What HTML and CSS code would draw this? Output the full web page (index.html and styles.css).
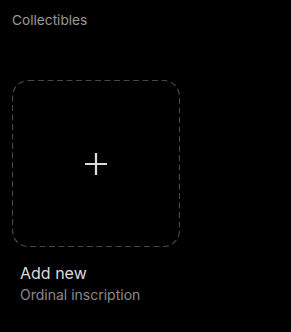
FILE: index.html
```html
<!DOCTYPE html>
<html lang="en">
<head>
    <meta charset="UTF-8">
    <title>Collectibles</title>
    <link rel="stylesheet" href="styles.css">
</head>
<body>
    <div class="section">
        <h2 class="section-title">Collectibles</h2>
        <div class="card">
            <div class="card-add">
                <svg class="card-border" width="168" height="167" viewBox="0 0 168 167">
                    <rect x="0.5" y="0.5" width="167" height="166" rx="16" fill="none" stroke="#46464c" stroke-width="1.2" stroke-dasharray="6 3.5"/>
                </svg>
                <svg width="24" height="24" viewBox="0 0 24 24">
                    <path d="M12 1v22M1 12h22" stroke="#dcdcdc" stroke-width="2.2"/>
                </svg>
            </div>
            <div class="card-info">
                <div class="card-name">Add new</div>
                <div class="card-sub">Ordinal inscription</div>
            </div>
        </div>
    </div>
</body>
</html>
```

FILE: styles.css
```css
* {
    margin: 0;
    padding: 0;
    box-sizing: border-box;
}

body {
    font-family: Inter, 'Noto Sans', sans-serif;
    background: #000;
    width: 291px;
    height: 332px;
}

.section {
    padding: 12px 12px;
}

.section-title {
    font-size: 13.7px;
    font-weight: 400;
    color: #9a9a9a;
    line-height: 16px;
}

.card {
    width: 168px;
    margin-top: 52px;
}

.card-add {
    position: relative;
    height: 167px;
    display: flex;
    align-items: center;
    justify-content: center;
}

.card-border {
    position: absolute;
    left: 0;
    top: 0;
}

.card-info {
    padding: 17px 8px 0;
}

.card-name {
    font-size: 16px;
    color: #dcdcdc;
    line-height: 19px;
}

.card-sub {
    font-size: 14px;
    color: #8a8a8a;
    line-height: 17px;
    margin-top: 3px;
}
```
